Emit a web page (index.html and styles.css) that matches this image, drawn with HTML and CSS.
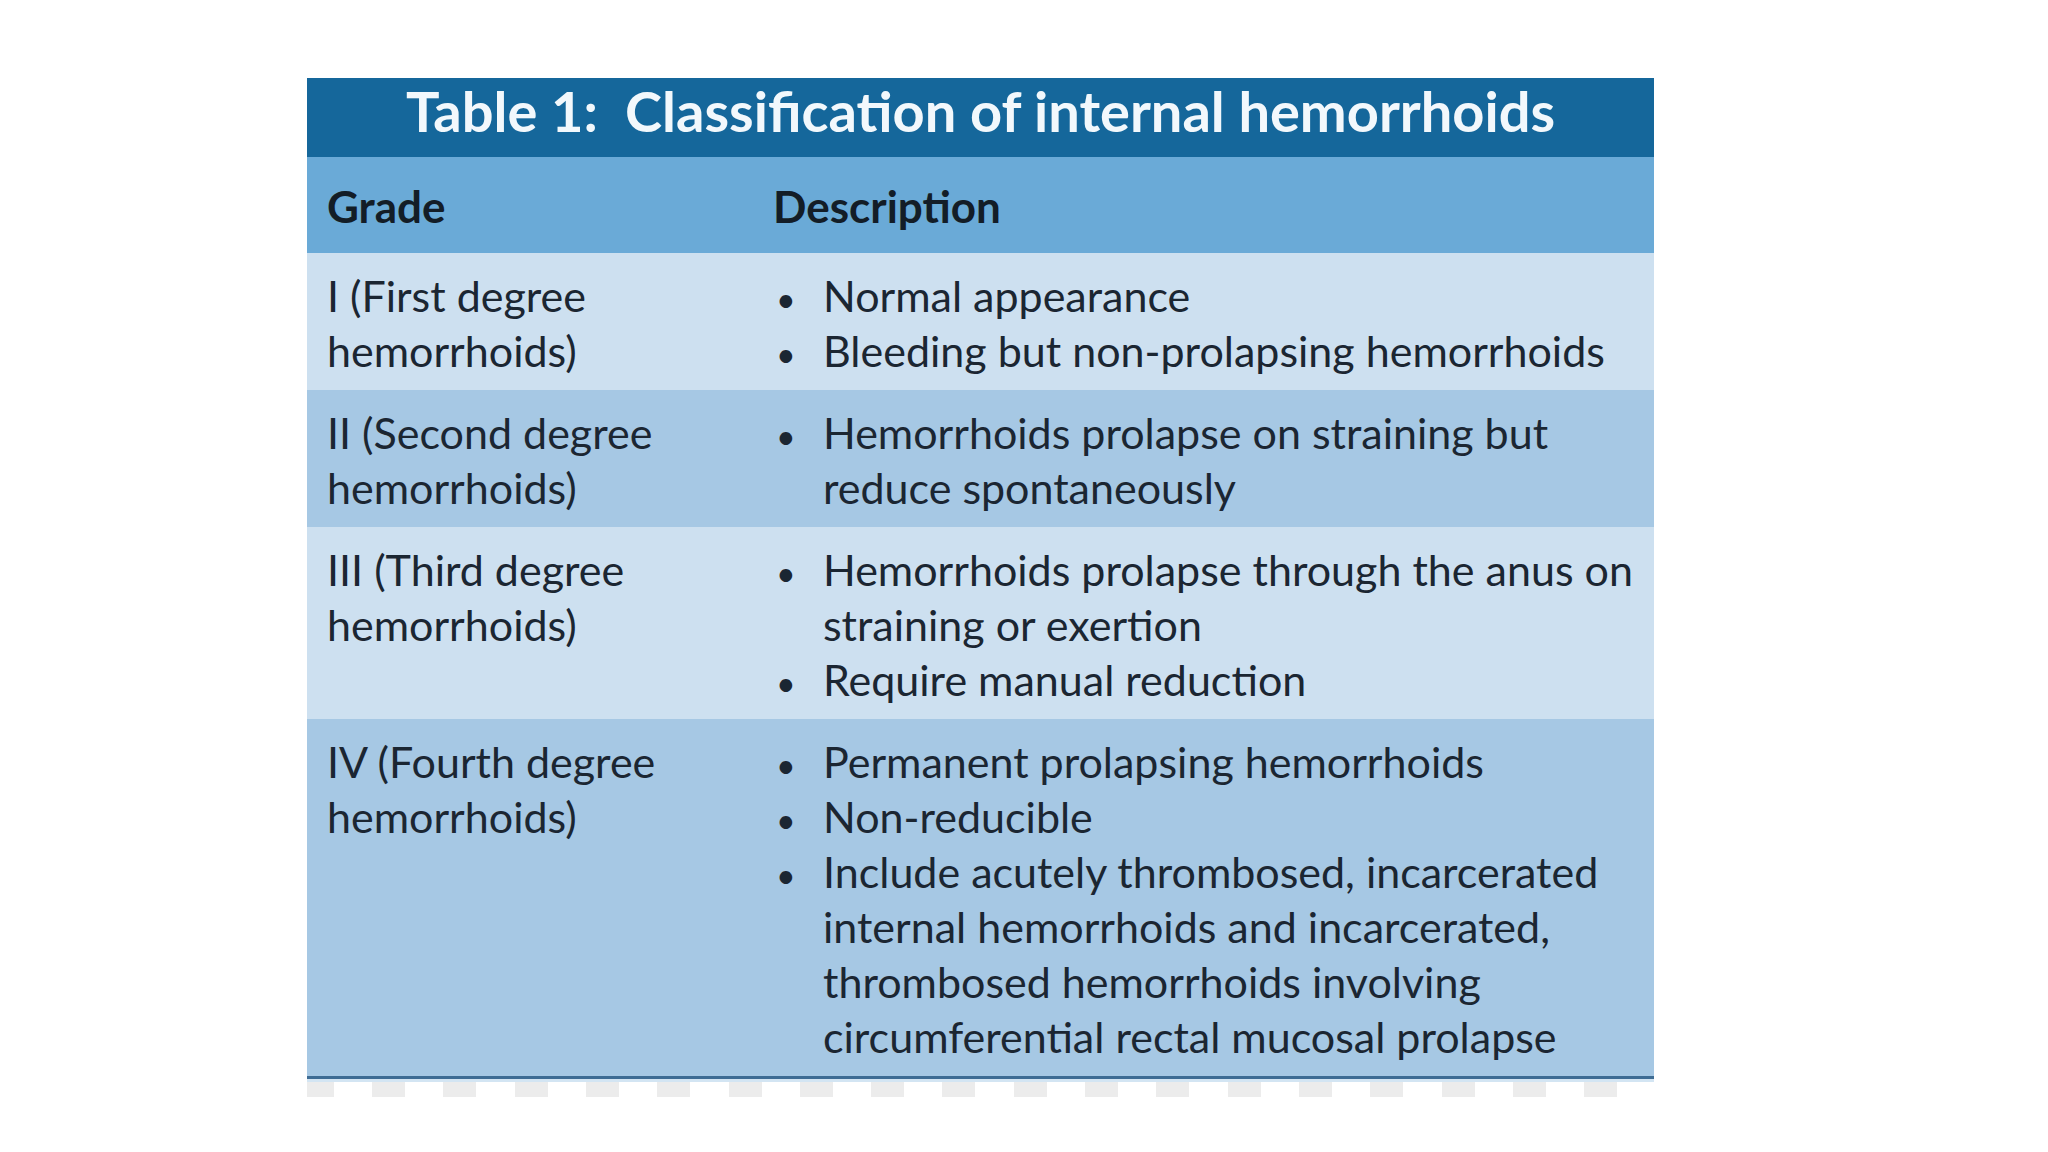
FILE: index.html
```html
<!DOCTYPE html>
<html lang="en">
<head>
<meta charset="utf-8">
<title>Table 1: Classification of internal hemorrhoids</title>
<link rel="stylesheet" href="styles.css">
</head>
<body>
<div class="figure">
  <div class="title">Table 1:&nbsp; Classification of internal hemorrhoids</div>
  <div class="row head">
    <div class="cell grade">Grade</div>
    <div class="cell desc">Description</div>
  </div>
  <div class="row light">
    <div class="cell grade">I (First degree hemorrhoids)</div>
    <div class="cell desc">
      <ul class="list">
        <li><span class="dot">•</span><span class="txt">Normal appearance</span></li>
        <li><span class="dot">•</span><span class="txt">Bleeding but non-prolapsing hemorrhoids</span></li>
      </ul>
    </div>
  </div>
  <div class="row mid">
    <div class="cell grade">II (Second degree hemorrhoids)</div>
    <div class="cell desc">
      <ul class="list">
        <li><span class="dot">•</span><span class="txt">Hemorrhoids prolapse on straining but reduce spontaneously</span></li>
      </ul>
    </div>
  </div>
  <div class="row light">
    <div class="cell grade">III (Third degree hemorrhoids)</div>
    <div class="cell desc">
      <ul class="list">
        <li><span class="dot">•</span><span class="txt">Hemorrhoids prolapse through the anus on straining or exertion</span></li>
        <li><span class="dot">•</span><span class="txt">Require manual reduction</span></li>
      </ul>
    </div>
  </div>
  <div class="row mid last">
    <div class="cell grade">IV (Fourth degree hemorrhoids)</div>
    <div class="cell desc">
      <ul class="list">
        <li><span class="dot">•</span><span class="txt">Permanent prolapsing hemorrhoids</span></li>
        <li><span class="dot">•</span><span class="txt">Non-reducible</span></li>
        <li><span class="dot">•</span><span class="txt">Include acutely thrombosed, incarcerated internal hemorrhoids and incarcerated, thrombosed hemorrhoids involving circumferential rectal mucosal prolapse</span></li>
      </ul>
    </div>
  </div>
  <div class="edge"></div>
  <div class="stripe"></div>
</div>
</body>
</html>
```

FILE: styles.css
```css
html, body {
  margin: 0;
  padding: 0;
  background: #ffffff;
}

body {
  padding: 78px 0 0 307px;
  font-family: Lato, "Open Sans", "Liberation Sans", sans-serif;
  color: #1b2632;
}

.figure {
  width: 1347px;
}

.title {
  height: 79px;
  box-sizing: border-box;
  padding-bottom: 14px;
  display: flex;
  align-items: center;
  justify-content: center;
  background: #15679b;
  color: #f2f8fc;
  font-weight: 700;
  font-size: 56px;
  white-space: nowrap;
}

.row {
  display: grid;
  grid-template-columns: 446px 1fr;
}

.cell {
  padding: 15px 20px 12px 20px;
  font-size: 43px;
  line-height: 55px;
}

.desc {
  padding-right: 10px;
}

.head {
  height: 96px;
  background: #6aaad7;
  align-items: center;
}

.head .cell {
  padding-top: 2px;
  padding-bottom: 0;
  font-weight: 700;
  font-size: 44px;
  line-height: 52px;
  color: #131d27;
}

.light {
  background: #cde0f0;
}

.mid {
  background: #a6c8e4;
}

.list {
  list-style: none;
  margin: 0;
  padding: 0;
}

.list li {
  display: flex;
  align-items: baseline;
}

.dot {
  flex: 0 0 50px;
  font-size: 34px;
  line-height: 1;
  padding-left: 3px;
  box-sizing: border-box;
}

.txt {
  flex: 1 1 auto;
}

.edge {
  height: 3px;
  background: #3e6c94;
  border-bottom: 3px solid #d3e5f3;
}

.stripe {
  height: 15px;
  background: repeating-linear-gradient(90deg,
    #ececec 0px, #ececec 26.7px,
    #ffffff 26.7px, #ffffff 65px,
    #ececec 65px, #ececec 71.3px);
}
```
